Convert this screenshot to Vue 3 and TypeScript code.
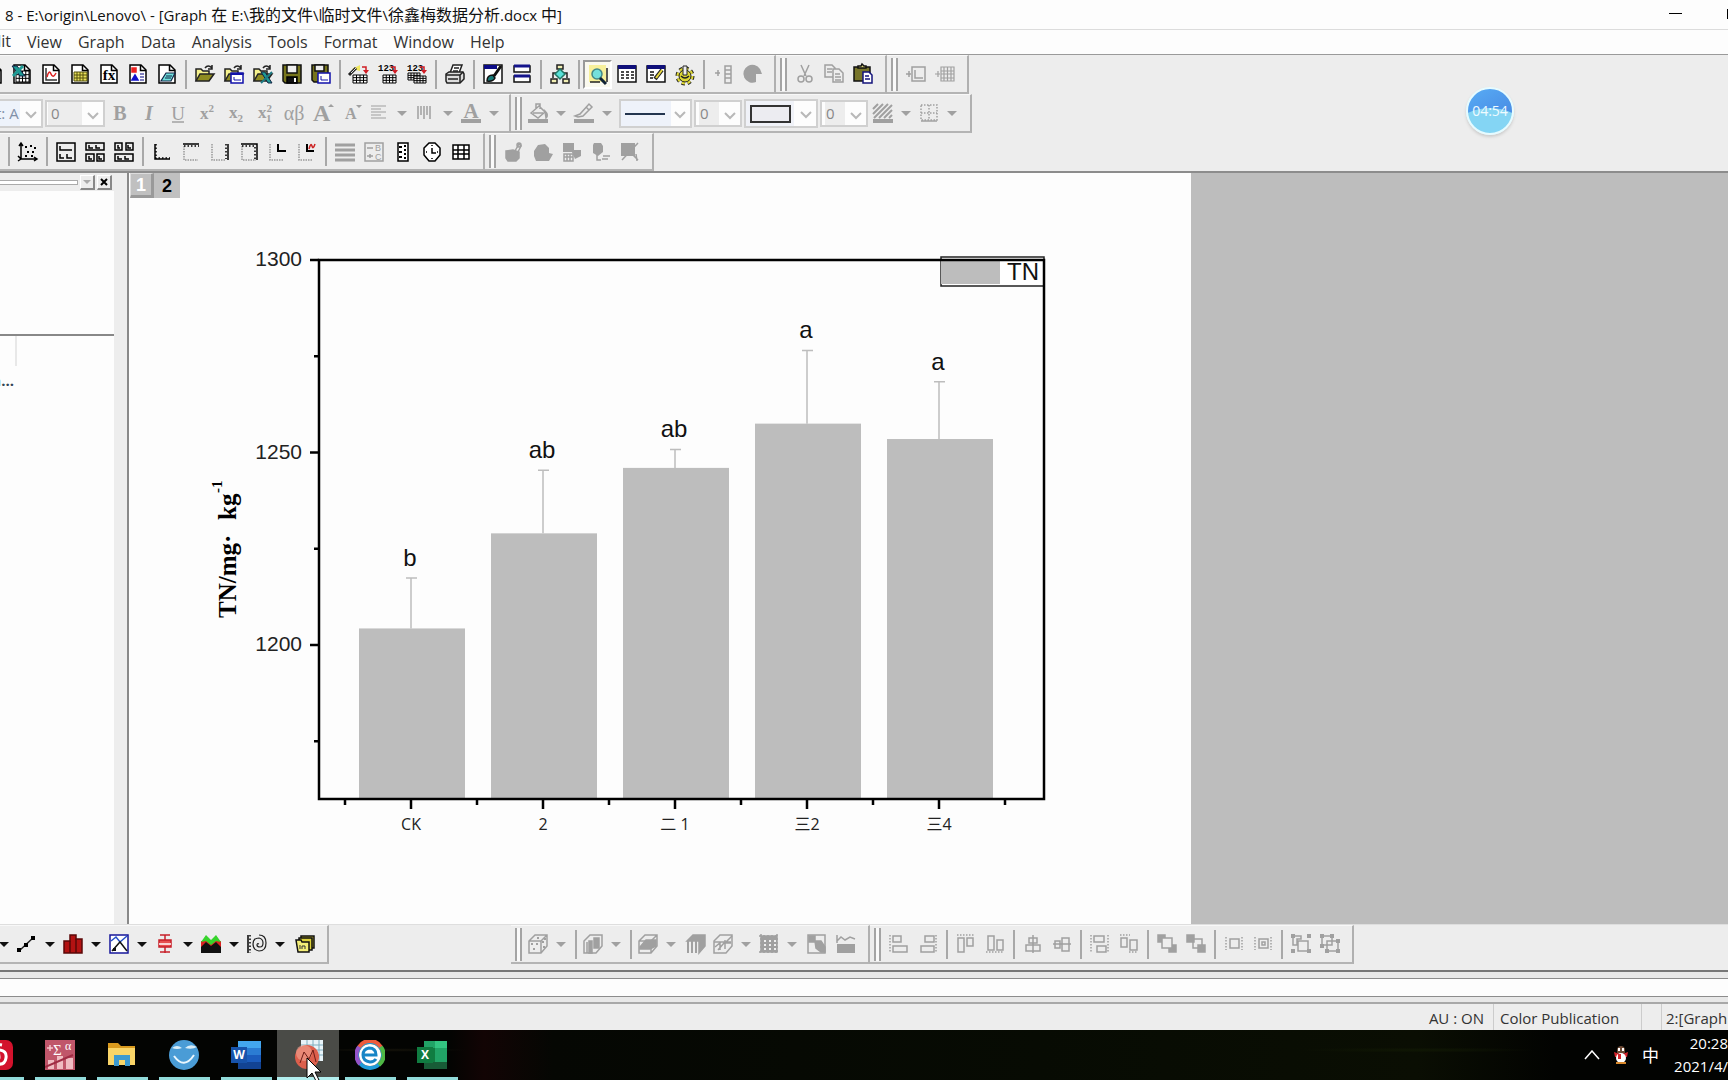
<script setup lang="ts">
interface Tool {
  icon: string
  kind?: 'sep' | 'drop' | 'pressed'
  tone?: 'gray'
}

const doc = '<path d="M2 1h11l5 5v13H2z" fill="#fff" stroke="#000"/><path d="M12.500 1v5.500H18" stroke="#000"/>'
const grid = (x: number, y: number, w: number, h: number, fill: string, stroke = '#000') =>
  `<path d="M${x} ${y}h${w}v${h}h-${w}zM${x} ${y + h / 3}h${w}M${x} ${y + (2 * h) / 3}h${w}M${x + w / 4} ${y}v${h}M${x + w / 2} ${y}v${h}M${x + (3 * w) / 4} ${y}v${h}" fill="${fill}" stroke="${stroke}" stroke-width="1"/>`
const letter = (t: string, size = 20, extra = '') =>
  `<text x="10" y="17" text-anchor="middle" stroke="none" fill="currentColor" font-family="Liberation Serif, serif" font-size="${size}" ${extra}>${t}</text>`
const digits = '<text x="0" y="7" stroke="none" fill="#000" font-size="9" font-weight="bold" font-family="Liberation Mono, monospace">123</text>'
const redArrow = '<path d="M13 3h4v4" stroke="#d01c24"/><path d="M14 6h6l-3 4z" stroke="none" fill="#d01c24"/>'
const folder = '<path d="M1 17V5h5l2 2h6v3" fill="#f6f28c" stroke="#222"/><path d="M1 17l4-7h14l-5 7z" fill="#8f8c20" stroke="#222"/><path d="M10 4q3-4 7 0M17 1v4h-4" stroke="#222"/>'
const cube = '<path d="M1 7l6-6h12v11l-6 7H1zM1 7h12l6-6M13 7v12"/>'
const dots = 'stroke-dasharray="1.500 1.500"'

const art: Record<string, string> = {
  sheet: doc + grid(4, 8, 12, 9, '#fff'),
  excel: doc + grid(4, 7, 13, 11, '#fff') + '<path d="M0 2h5l8 10H8z" fill="#1d9a94" stroke="#124" stroke-width="1"/><path d="M11 2L1 12" stroke="#1d9a94" stroke-width="3"/>',
  graph: doc + '<path d="M5 4v12h11" stroke="#333"/><path d="M6 13q2-8 4-3t5-1" stroke="#d22"/>',
  matrix: doc + '<path d="M4 8h13v9H4z" fill="#e8e05a" stroke="#55500c" stroke-width="1"/><path d="M4 11h13M4 14h13M7 8v9M10 8v9M13 8v9" stroke="#55500c" stroke-width="1"/>',
  fx: doc + '<text x="10" y="16" text-anchor="middle" stroke="none" fill="#000" font-size="15" font-weight="bold" font-family="Liberation Serif, serif">fx</text>',
  layout: doc + '<path d="M4 4h4v4H4z" fill="#e22" stroke="#e22"/><path d="M4 16l3-5 3 5z" fill="#11c" stroke="#11c"/><path d="M12 10h4M12 13h4M12 16h4" stroke="#55a"/>',
  notes: doc + '<path d="M9 9h9l-4 8H4z" fill="#6fe0dc" stroke="#124" stroke-width="1.200"/><path d="M9 12h6M8 14h6" stroke="#124" stroke-width="1"/>',
  open: folder,
  opengraph: folder + '<path d="M7 9h12v10H7z" fill="#fff" stroke="#11a"/><path d="M7 10h12" stroke="#11a" stroke-width="2"/><path d="M10 13v3h7" stroke="#11a" stroke-width="1"/>',
  openexcel: folder + '<path d="M8 8h4l7 11h-4z" fill="#1d9a94" stroke="#124" stroke-width="1"/><path d="M19 8L8 19" stroke="#1d7a84" stroke-width="2"/>',
  save: '<path d="M1 1h18v18H3l-2-2z" fill="#77751c" stroke="#111"/><path d="M5 1h10v8H5z" fill="#eee" stroke="#111"/><path d="M5 13h10v6H5z" fill="#111"/><path d="M12 14h2v4h-2z" fill="#fff" stroke="none"/>',
  saveas: '<path d="M1 1h16v17H3l-2-2z" fill="#77751c" stroke="#111"/><path d="M4 1h9v6H4z" fill="#eee" stroke="#111"/><path d="M7 9h12v10H7z" fill="#fff" stroke="#11a"/><path d="M10 12v4h7" stroke="#11a" stroke-width="1"/>',
  wizard: grid(4, 11, 14, 8, '#fff') + '<path d="M3 5l8-4v6z" fill="#f1e860" stroke="none"/><path d="M0 11l7-7" stroke="#222" stroke-width="3"/><path d="M2 9l5-5" stroke="#ddd" stroke-width="1"/>' + redArrow,
  import1: digits + grid(5, 11, 13, 8, '#fff') + redArrow,
  importn: digits + grid(1, 9, 12, 7, '#fff') + grid(7, 12, 12, 7, '#fff') + redArrow,
  print: '<path d="M5 9l3-8h9l-3 8" fill="#fff" stroke="#222"/><path d="M9 4h5M8 7h5" stroke="#222"/><path d="M1 10l3-2h14l1 2v5l-4 4H2l-1-2z" fill="#ddd" stroke="#222"/><path d="M1 11h14l3-3M15 11v8M3 15h10" stroke="#222"/>',
  theme: '<path d="M1 1h18v18H1z" fill="#fff" stroke="#111"/><path d="M1 3h13" stroke="#0b0b86" stroke-width="4"/><path d="M4 17q0-6 6-6l2 3q-2 4-8 3z" fill="#187a78" stroke="#111"/><path d="M11 12l7-10" stroke="#111" stroke-width="3"/>',
  split: '<path d="M2 2h16v6H2zM2 12h16v6H2z" fill="#fff" stroke="#111"/><path d="M2 2h16M2 12h16" stroke="#14148c" stroke-width="3"/>',
  tree: '<path d="M10 5v4M10 9H3v5M10 9h7v5" stroke="#222"/><path d="M7 1h6v4H7zM1 15h6v4H1zM13 15h6v4h-6z" fill="#f2efb4" stroke="#222"/><path d="M10 5l5 5-5 5-5-5z" fill="#58e0d8" stroke="#276"/>',
  explorer: '<path d="M1 1h17v17H1z" fill="#f7f09a" stroke="none"/><circle cx="9" cy="10" r="5" fill="#74e0dc" stroke="#488"/><path d="M2 18h10M19 4v14" stroke="#222"/><path d="M12 14l6 6" stroke="#123" stroke-width="3"/>',
  results: '<path d="M1 2h18v16H1z" fill="#fff" stroke="#111"/><path d="M1 3h18" stroke="#10107a" stroke-width="4"/><path d="M4 8h3M9 8h3M14 8h3M4 11h3M9 11h3M14 11h3M4 14h3M9 14h3M14 14h3" stroke="#111"/>',
  command: '<path d="M1 2h18v16H1z" fill="#fff" stroke="#111"/><path d="M1 3h18" stroke="#10107a" stroke-width="4"/><path d="M4 8h4M4 11h4M4 14h3" stroke="#111"/><path d="M9 15l7-9" stroke="#222" stroke-width="4"/><path d="M10 14l6-8" stroke="#e8d840" stroke-width="2"/>',
  gear: '<circle cx="10" cy="12" r="7" fill="none" stroke="#222" stroke-width="5" stroke-dasharray="3 2.500"/><circle cx="10" cy="12" r="7" fill="none" stroke="#ddd735" stroke-width="3" stroke-dasharray="3 2.500"/><circle cx="10" cy="12" r="6" fill="#ddd735" stroke="#222" stroke-width="1"/><path d="M8 2h4v9H8z" fill="#eee" stroke="#222" stroke-width="1"/><path d="M6 12q4 4 8 0" stroke="#222"/>',
  addcol: '<path d="M12 2h6v17h-6zM12 6h6M12 10h6M12 14h6M2 9h5M5 6v6"/>',
  pie: '<path d="M18 5A9 9 0 1 0 14 18V10h6z" fill="currentColor" stroke="none"/>',
  cut: '<path d="M6 1l5 11M14 1L9 12"/><circle cx="6" cy="15" r="3"/><circle cx="14" cy="15" r="3"/>',
  copy: '<path d="M1 1h7l3 3v9H1zM3 5h5M3 8h5"/><path d="M9 5h6l4 4v9H9z" fill="#eee"/><path d="M11 10h5M11 13h6M11 16h6"/>',
  paste: '<path d="M1 3h16v14H1z" fill="#77752a" stroke="#111"/><path d="M5 4V2h3l1-2 2 2h2v2z" fill="#ddd67a" stroke="#111"/><path d="M10 8h6l3 3v8h-9z" fill="#fff" stroke="#14147c"/><path d="M12 12h4M12 15h5" stroke="#14147c"/>',
  addlayer: '<path d="M6 3h13v14H6zM9 6v8h8M0 10h5M3 7v6"/>',
  addgrid: '<path d="M6 3h13v14H6zM9 3v14M12.500 3v14M16 3v14M6 7h13M6 10h13M6 14h13M0 10h5M3 7v6" stroke-width="1.200"/>',
  bold: letter('B', 20, 'font-weight="bold"'),
  italic: letter('I', 20, 'font-weight="bold" font-style="italic"'),
  underline: letter('U', 19) + '<path d="M4 19h12"/>',
  sup: '<text x="3" y="16" stroke="none" fill="currentColor" font-family="Liberation Serif, serif" font-size="17" font-weight="bold">x<tspan font-size="11" dy="-7">2</tspan></text>',
  sub: '<text x="3" y="15" stroke="none" fill="currentColor" font-family="Liberation Serif, serif" font-size="17" font-weight="bold">x<tspan font-size="11" dy="4">2</tspan></text>',
  supsub: '<text x="3" y="15" stroke="none" fill="currentColor" font-family="Liberation Serif, serif" font-size="17" font-weight="bold">x<tspan font-size="11" dy="-6">2</tspan><tspan font-size="11" dx="-6" dy="10">1</tspan></text>',
  greek: letter('αβ', 20),
  bigger: '<text x="0" y="18" stroke="none" fill="currentColor" font-family="Liberation Serif, serif" font-size="24" font-weight="bold">A</text><path d="M15 4l3-3 3 3z" fill="currentColor" stroke="none"/>',
  smaller: '<text x="3" y="16" stroke="none" fill="currentColor" font-family="Liberation Serif, serif" font-size="16" font-weight="bold">A</text><path d="M14 2h6l-3 3z" fill="currentColor" stroke="none"/>',
  align: '<path d="M2 3h15M2 6h10M2 9h15M2 12h10M2 15h15" stroke-width="1.200"/>',
  tabs: '<path d="M3 3v13M6 3v9M9 3v13M12 3v9M15 3v13"/>',
  fontcolor: '<text x="10" y="15" text-anchor="middle" stroke="none" fill="currentColor" font-family="Liberation Serif, serif" font-size="21" font-weight="bold">A</text><path d="M0 18h20" stroke-width="4"/>',
  bucket: '<path d="M0 18h20" stroke-width="4"/><path d="M3 10l8-7 6 6-7 6zM8 5V1h4v5M5 10h10"/><path d="M17 8q4 4 1 7z" fill="currentColor"/>',
  pen: '<path d="M0 18h20" stroke-width="4"/><path d="M1 13l5-2 9-10 3 3-9 9-5 1zM12 4l3 3"/>',
  hatch: '<path d="M0 18h20" stroke-width="4"/><path d="M0 6l5-5M0 11L10 1M1 15L15 1M6 15L19 2M11 15l8-8M16 15l3-3" stroke-width="2"/>',
  borders: `<path d="M2 2h16v15H2zM10 2v15M2 10h16" ${dots}/><path d="M2 18h16"/>`,
  scatter: '<path d="M3 1v16h16M1 4l2-3 2 3M16 15l3 2-3 2M0 14l3 3-3 2"/><path d="M7 4h2v2H7zM12 3h2v2h-2zM16 5h2v2h-2zM9 9h2v2H9zM14 9h2v2h-2zM7 13h2v2H7zM13 13h2v2h-2z" fill="#000" stroke="none"/>',
  panel1: '<path d="M1 1h18v18H1zM4 4v4h12M4 12v4h4M11 12v4h5"/>',
  panel4: '<path d="M1 1h18v7H1zM1 12h8v7H1zM12 12h7v7h-7zM4 3v3h4M11 3v3h4M4 14v3h3M14 14v3h3"/>',
  panel6: '<path d="M1 1h7v7H1zM12 1h7v7h-7zM1 12h18v7H1zM4 3v3h2M14 3v3h3M4 14v3h4M11 14v3h4"/>',
  axisbl: '<path d="M3 2v15h15" stroke-width="1.500"/><path d="M4 2v15M3 16h15" stroke-dasharray="1.500 2"/>',
  axistop: '<path d="M3 4v14h14" stroke="#999" stroke-dasharray="1.500 1"/><path d="M2 2h16"/><path d="M3 4h15" stroke-dasharray="1.500 2"/>',
  axisright: '<path d="M2 2v16h14" stroke="#999" stroke-dasharray="1.500 1"/><path d="M18 2v16"/><path d="M16 2v15" stroke-dasharray="1.500 2"/>',
  axisbox: '<path d="M3 4v14h14" stroke="#999" stroke-dasharray="1.500 1"/><path d="M2 2h16v16"/><path d="M3 4h13v14" stroke-dasharray="1.500 2"/>',
  inset: '<path d="M2 2v16h14" stroke="#999" stroke-dasharray="1.500 1"/><path d="M10 2v7h8" stroke-width="2"/>',
  insetcurve: '<path d="M2 2v16h14" stroke="#999" stroke-dasharray="1.500 1"/><path d="M10 2v7h7" stroke-width="2"/><path d="M12 7q2-7 3-3t3-2" stroke="#c22"/>',
  stack: '<path d="M0 3h20M0 8h20M0 13h20M0 18h20" stroke-width="3"/>',
  legend: '<path d="M1 1h18v18H1zM3 6h6M3 14h6M6 12v4"/><text x="11" y="9" font-size="9" stroke="none" fill="currentColor" font-family="Liberation Sans, sans-serif">B</text><text x="11" y="18" font-size="9" stroke="none" fill="currentColor" font-family="Liberation Sans, sans-serif">C</text>',
  scale: '<path d="M5 1h10v18H5z" fill="#fff"/><path d="M6 5h3M6 10h3M6 15h3" stroke-width="2"/><path d="M12 3v15" stroke-dasharray="2 2" stroke-width="2"/>',
  clock: '<path d="M7 1h6l5 5v7l-5 6H7l-5-6V6z" fill="#fff"/><path d="M10 6v5h4"/><path d="M10 3v1M10 16v1M4 10h1M15 10h1"/>',
  table: '<path d="M2 3h16v14H2zM2 8h16M2 12h16M7 3v14M13 3v14" fill="#fff"/>',
  hand1: '<path d="M2 9l7-1 6 2v6l-3 3H4l-2-3z" fill="currentColor"/><path d="M11 9l4-7 2 2-3 6"/><circle cx="15" cy="3" r="2"/>',
  hand2: '<path d="M1 9l4-6 7-1 4 4v5l4 1-4 7H3l-2-5z" fill="currentColor" stroke="none"/>',
  hand3: '<path d="M1 1h11v9H1zM9 8h10v6l-6 3z" fill="currentColor" stroke="none"/><path d="M2 12h9v7H2zM5 12v7M8 12v7M2 15h9"/>',
  hand4: '<path d="M3 1h7l2 3v6l-5 4-5-3V3z" fill="currentColor" stroke="none"/><path d="M6 13v5h4M12 14h7M11 17h6"/>',
  hand5: '<path d="M1 1h14v13H1z" fill="currentColor" stroke="none"/><path d="M2 18L18 1M3 3l15 15M16 12l1 7"/>',
  symline: '<path d="M2 17L17 3" stroke="#222"/><path d="M0 14h4v4H0zM7 9h4v4H7zM14 2h4v4h-4z" fill="#000" stroke="none"/>',
  column: '<path d="M1 7h6V1h6v4h6v14H1z" fill="#b31212" stroke="#5b0808"/><path d="M7 7v12M13 5v14" stroke="#5b0808"/>',
  multi: '<path d="M1 1h18v18H1z" fill="#fff" stroke="#16169a"/><path d="M2 7l5-4 4 5 7-6" stroke="#2350c8"/><path d="M3 17l8-9 7 9" stroke="#111"/><path d="M4 14h3v3H4z" fill="#111" stroke="none"/>',
  box: '<path d="M5 1h10M10 1v18M5 18h10" stroke="#c8202a"/><path d="M4 6h12v7H4z" fill="#e65050" stroke="#c8202a"/><path d="M4 10h12" stroke="#fff"/>',
  area: '<path d="M0 7h20v12H0z" fill="#d22" stroke="none"/><path d="M0 13l5-5 5 4 5-4 5 5v6H0z" fill="#111" stroke="none"/><path d="M0 8l5-7 5 5 5-5 5 7-5-1-5 4-5-4z" fill="#36d42c" stroke="none"/>',
  polar: '<path d="M1 1v18" /><path d="M3 1v18" stroke-dasharray="1.500 2"/><path d="M12 10q-2-1-2 1t3 2q3 0 3-4t-4-5q-6 0-6 6t6 7q7 0 7-8t-7-8" stroke="#222" stroke-width="1.200"/>',
  template: '<path d="M6 2h13v12H6z" fill="#c9bc2e" stroke="#111"/><path d="M4 4h13v12H4z" fill="#ddd238" stroke="#111"/><path d="M1 6h5l1 2h7v10H3z" fill="#f4ee78" stroke="#111"/><path d="M5 15v-4M7 15v-3h3v3" stroke="#333" stroke-width="1"/>',
  cubedots: cube + '<path d="M3 9h2v2H3zM8 9h2v2H8zM5 14h2v2H5zM14 7h2v2h-2zM16 4h2v2h-2zM9 3h2v2H9zM15 12h2v2h-2z" fill="currentColor" stroke="none"/>',
  cubebars: '<path d="M1 7l6-6h12v11l-6 7H1zM4 8v11"/><path d="M6 7h3v12H6zM11 4h5v10h-5z" fill="currentColor"/>',
  cubesurf: cube + '<path d="M2 13l6-7h10v6l-6 3H2z" fill="currentColor"/>',
  cubewall: '<path d="M1 7l6-6h12v11l-6 7V7z" fill="currentColor"/><path d="M2 7v12M6 7v12M10 7v12" stroke-width="2"/>',
  cubewire: '<path d="M1 7l6-6h12v11l-6 7H1z"/><path d="M1 8h12l6-6M2 13l6-5h10M5 16l6-7h7M7 8v8M12 6v9"/>',
  mesh: '<path d="M2 2h16v16H2z" fill="currentColor"/><path d="M0 2h20M0 18h20M2 0v20M18 0v20" stroke-dasharray="2 2"/><path d="M5 7h2M10 7h2M15 7h2M5 11h2M10 11h2M15 11h2M5 15h2M10 15h2M15 15h2" stroke="#eee" stroke-width="2"/>',
  imageplot: '<path d="M1 1h17v18H1z"/><path d="M2 2h6v6H2zM8 7h6l4 6v5h-4l-5-4z" fill="currentColor"/>',
  profile: '<path d="M1 10h18v9H1z" fill="currentColor" stroke="none"/><path d="M1 1v8M1 7l4-4 4 3 5-3 5 2"/>',
  alleft: `<path d="M1 1v18" ${dots}/><path d="M4 2h8v6H4zM4 12h14v6H4z"/>`,
  alright: `<path d="M18 1v18" ${dots}/><path d="M7 2h9v6H7zM3 12h13v6H3z"/>`,
  altop: `<path d="M1 1h18" ${dots}/><path d="M2 4h6v14H2zM11 4h6v8h-6z"/>`,
  albottom: `<path d="M1 18h18" ${dots}/><path d="M3 2h6v14H3zM12 6h6v10h-6z"/>`,
  alcx: '<path d="M10 1v18M6 4h8v5H6zM3 11h14v6H3z"/>',
  alcy: '<path d="M1 10h18M3 7h5v7H3zM10 4h7v13h-7z"/>',
  eqw: `<path d="M1 1v18M18 1v18" ${dots}/><path d="M4 2h10v6H4zM7 12h9v6H7z"/>`,
  eqh: `<path d="M1 1h10M10 18h9" ${dots}/><path d="M2 4h6v9H2zM11 6h7v10h-7z"/>`,
  front: '<path d="M1 1h7v7H1zM12 11h7v7h-7z" fill="currentColor"/><path d="M5 4h10v10H5z" fill="#eee"/>',
  back: '<path d="M7 5h9v9H7z"/><path d="M1 1h7v7H1zM12 11h7v7h-7z" fill="currentColor"/>',
  snap: `<path d="M6 5h9v9H6z"/><path d="M2 3v13M18 3v13" ${dots}/>`,
  snapgrid: `<path d="M6 5h9v9H6zM9 8h3v3H9z"/><path d="M2 3v13M18 3v13" ${dots}/>`,
  group: '<path d="M2 2h8v3H6v6H2zM7 7h10v10H7z"/><path d="M0 0h4v4H0zM16 0h4v4h-4zM0 15h4v4H0zM16 15h4v4h-4z" fill="currentColor" stroke="none"/>',
  ungroup: '<path d="M2 2h10v9H2zM7 7h11v10H7z"/><path d="M0 0h4v4H0zM10 0h4v4h-4zM0 10h4v4H0zM16 5h4v4h-4zM5 15h4v4H5zM16 15h4v4h-4z" fill="currentColor" stroke="none"/>',
}

function tools(spec: string, tone?: 'gray'): Tool[] {
  return spec.split(' ').map((s) => {
    if (s === '|') return { icon: 'sep', kind: 'sep' as const }
    if (s.endsWith('+')) return { icon: s.slice(0, -1), kind: 'drop' as const, tone }
    if (s.endsWith('!')) return { icon: s.slice(0, -1), kind: 'pressed' as const, tone }
    return { icon: s, tone }
  })
}

const standard = tools('sheet excel graph matrix fx layout notes | open opengraph openexcel save saveas | wizard import1 importn | print | theme split | tree | explorer! results command gear |').concat(tools('addcol pie', 'gray'))
const edit = tools('cut copy', 'gray').concat(tools('paste'))
const column = tools('addlayer addgrid', 'gray')
const format = tools('bold italic underline sup sub supsub greek bigger smaller align+ tabs+ fontcolor+', 'gray')
const style = tools('bucket+ pen+', 'gray')
const fill = tools('hatch+ borders+', 'gray')
const graphTools = tools('| scatter | panel1 panel4 panel6 | axisbl axistop axisright axisbox inset insetcurve |').concat(tools('stack legend', 'gray'), tools('scale clock table'))
const mask = tools('hand1 hand2 hand3 hand4 hand5', 'gray')
const plot2d = tools('symline+ column+ multi+ box+ area+ polar+ template')
const plot3d = tools('cubedots+ | cubebars+ | cubesurf+ cubewall cubewire+ mesh+ imageplot profile', 'gray')
const objects = tools('alleft alright | altop albottom | alcx alcy | eqw eqh | front back | snap snapgrid | group ungroup', 'gray')

const menus = ['View', 'Graph', 'Data', 'Analysis', 'Tools', 'Format', 'Window', 'Help']

const plot = { left: 190, right: 915, top: 87, bottom: 626, max: 1300, min: 1160 }
const yOf = (v: number) => plot.top + ((plot.max - v) * (plot.bottom - plot.top)) / (plot.max - plot.min)
const bars = [
  { name: 'CK', value: 1204.3, high: 1217.4, mark: 'b' },
  { name: '2', value: 1229, high: 1245.4, mark: 'ab' },
  { name: '二 1', value: 1246, high: 1250.8, mark: 'ab' },
  { name: '三2', value: 1257.5, high: 1276.5, mark: 'a' },
  { name: '三4', value: 1253.5, high: 1268.4, mark: 'a' },
]
const xOf = (i: number) => 282 + i * 132
const major = [1300, 1250, 1200]
const minor = [1275, 1225, 1175]

const apps = ['music', 'spss', 'files', 'bird', 'word', 'origin', 'browser', 'sheets']
const appArt: Record<string, string> = {
  music: '<rect width="30" height="30" rx="7" fill="#d3122c"/><path d="M19 5q-5-1-4 4l1 8q0 4-4 3t-2-6 7-4q7 1 6 8t-8 6" fill="none" stroke="#fff" stroke-width="3"/>',
  spss: '<path d="M0 0h30v30H0z" fill="#c0566a"/><path d="M3 20h6v9H3zM12 16h6v13h-6zM21 18h7v11h-7z" fill="#f0bcc2"/><path d="M0 27l28-12" stroke="#a02c44" stroke-width="2"/><path d="M2 8h6M5 5v6" stroke="#f5c5ca" stroke-width="1.500"/><text x="8" y="15" fill="#fff" font-size="15" font-family="Liberation Serif, serif">Σ</text><text x="20" y="10" fill="#fff" font-size="12" font-family="Liberation Serif, serif">α</text>',
  files: '<path d="M1 3h10l3 3h14v7H1z" fill="#d99a1e"/><path d="M1 8h27v17H1z" fill="#f9d568"/><path d="M7 26V15h16v11h-5v-6h-6v6z" fill="#3d9ad0"/>',
  bird: '<circle cx="15" cy="15" r="15" fill="#4a9cd6"/><path d="M3 8q5-4 10 0-5 2-10 0zM16 8q5-5 12-1-5 3-12 1z" fill="#d8edf8"/><path d="M5 16q10 14 20-1" fill="none" stroke="#eaf6fd" stroke-width="2"/>',
  word: '<path d="M7 1h23v28H7z" fill="#2b7cd3"/><path d="M7 1h23v7H7z" fill="#43a6ee"/><path d="M7 15h23v7H7z" fill="#1b5cbd"/><path d="M7 22h23v7H7z" fill="#124393"/><path d="M0 7h16v16H0z" fill="#1753ab"/><text x="8" y="19" text-anchor="middle" fill="#fff" font-size="12" font-weight="bold" font-family="Open Sans, sans-serif">W</text>',
  origin: '<path d="M8 0h22v21H8z" fill="#e8f3f8"/><path d="M8 5h22M8 10h22M8 15h22M14 0v21M20 0v21M26 0v21" stroke="#7eaebf"/><circle cx="14" cy="17" r="12" fill="#dc5f4c"/><circle cx="11" cy="13" r="8" fill="#f2a595" opacity=".6"/><path d="M7 23l4-11 5 7 4-9 3 12" fill="none" stroke="#6d1c16" stroke-width="1"/>',
  browser: '<circle cx="15" cy="15" r="13" fill="none" stroke="#1e9bd8" stroke-width="4"/><path d="M4 7A13 13 0 0 1 26 7" fill="none" stroke="#ef5b3c" stroke-width="4"/><path d="M4 7A13 13 0 0 0 5 24" fill="none" stroke="#9453c8" stroke-width="4"/><path d="M26 7A13 13 0 0 1 24 25" fill="none" stroke="#4fb844" stroke-width="4"/><circle cx="15" cy="15" r="11" fill="#fff"/><path d="M7 15h14q0-7-7-7-6 1-6 7t7 7q4 0 6-3" fill="none" stroke="#1885c6" stroke-width="3"/>',
  sheets: '<path d="M7 1h23v28H7z" fill="#21a366"/><path d="M18 1h12v7H18z" fill="#33c481"/><path d="M7 8h11v14H7z" fill="#107c41"/><path d="M7 22h23v7H7z" fill="#185c37"/><path d="M0 7h16v16H0z" fill="#107c41"/><text x="8" y="19" text-anchor="middle" fill="#fff" font-size="12" font-weight="bold" font-family="Open Sans, sans-serif">X</text>',
}
</script>

<template>
  <div class="window">
    <header class="title">
      <span>8 - E:\origin\Lenovo\ - [Graph <i class="han">在</i> E:\<i class="han">我的文件</i>\<i class="han">临时文件</i>\<i class="han">徐鑫梅数据分析</i>.docx <i class="han">中</i>]</span>
      <div class="controls">
        <button aria-label="Minimize"><i class="min"></i></button>
        <button aria-label="Restore"><i class="restore"></i></button>
      </div>
    </header>
    <nav class="menu">
      <button class="cut">dit</button>
      <button v-for="m in menus" :key="m">{{ m }}</button>
    </nav>

    <section class="docks">
      <div class="dock standard">
        <div v-for="(bar, b) in [standard, edit, column]" :key="b" class="bar">
          <span v-if="b > 0" class="grip"></span>
          <template v-for="(t, i) in bar" :key="i">
            <span v-if="t.kind === 'sep'" class="sep"></span>
            <button v-else class="tool" :class="[t.kind, t.tone]" :aria-label="t.icon">
              <svg viewBox="0 0 20 20" v-html="art[t.icon]"></svg>
            </button>
          </template>
        </div>
      </div>

      <div class="dock">
        <div class="bar text-bar">
          <div class="combo font">
            <select aria-label="Font"><option>t: A</option></select>
            <svg class="chev" viewBox="0 0 12 8"><path d="M1 1l5 5 5-5" /></svg>
          </div>
          <div class="combo size">
            <select aria-label="Font size"><option>0</option></select>
            <svg class="chev" viewBox="0 0 12 8"><path d="M1 1l5 5 5-5" /></svg>
          </div>
          <template v-for="t in format" :key="t.icon">
            <button class="tool gray" :class="{ slim: t.kind === 'drop' }" :aria-label="t.icon">
              <svg viewBox="0 0 20 20" v-html="art[t.icon]"></svg>
            </button>
            <button v-if="t.kind === 'drop'" class="arrow gray" :aria-label="t.icon + ' options'"></button>
          </template>
        </div>
        <div class="bar">
          <span class="grip"></span>
          <template v-for="t in style" :key="t.icon">
            <button class="tool gray slim" :aria-label="t.icon">
              <svg viewBox="0 0 20 20" v-html="art[t.icon]"></svg>
            </button>
            <button class="arrow gray" :aria-label="t.icon + ' options'"></button>
          </template>
          <div class="combo line">
            <select aria-label="Line style"><option></option></select>
            <i class="sample"></i>
            <svg class="chev" viewBox="0 0 12 8"><path d="M1 1l5 5 5-5" /></svg>
          </div>
          <div class="combo width">
            <select aria-label="Line width"><option>0</option></select>
            <svg class="chev" viewBox="0 0 12 8"><path d="M1 1l5 5 5-5" /></svg>
          </div>
          <div class="combo pattern">
            <select aria-label="Fill pattern"><option></option></select>
            <i class="swatch"></i>
            <svg class="chev" viewBox="0 0 12 8"><path d="M1 1l5 5 5-5" /></svg>
          </div>
          <div class="combo width">
            <select aria-label="Pattern width"><option>0</option></select>
            <svg class="chev" viewBox="0 0 12 8"><path d="M1 1l5 5 5-5" /></svg>
          </div>
          <template v-for="t in fill" :key="t.icon">
            <button class="tool gray slim" :aria-label="t.icon">
              <svg viewBox="0 0 20 20" v-html="art[t.icon]"></svg>
            </button>
            <button class="arrow gray" :aria-label="t.icon + ' options'"></button>
          </template>
        </div>
      </div>

      <div class="dock graphs">
        <div v-for="(bar, b) in [graphTools, mask]" :key="b" class="bar">
          <span v-if="b > 0" class="grip"></span>
          <template v-for="(t, i) in bar" :key="i">
            <span v-if="t.kind === 'sep'" class="sep"></span>
            <button v-else class="tool" :class="t.tone" :aria-label="t.icon">
              <svg viewBox="0 0 20 20" v-html="art[t.icon]"></svg>
            </button>
          </template>
        </div>
      </div>
    </section>

    <main class="work">
      <aside class="side">
        <div class="side-head">
          <i class="rails"></i>
          <button class="mini" aria-label="Options"><i class="tri"></i></button>
          <button class="mini" aria-label="Close">
            <svg viewBox="0 0 10 10"><path d="M2 2l6 6M8 2L2 8" /></svg>
          </button>
        </div>
        <div class="folders"></div>
        <div class="files">
          <span class="stem"></span>
          <div class="name"><span>n...</span></div>
        </div>
      </aside>
      <div class="child">
        <div class="page">
          <div class="layers"><button class="off">1</button><button class="on">2</button></div>
          <svg class="chart" viewBox="0 0 1062 751" role="img" aria-label="TN by treatment">
            <rect x="812" y="84" width="103" height="29" fill="#fff" stroke="#222" stroke-width="1.5" />
            <rect x="812" y="88" width="59" height="23" fill="#bdbdbd" />
            <text x="878" y="107" class="mark">TN</text>
            <g v-for="(b, i) in bars" :key="b.name">
              <rect :x="xOf(i) - 52" :y="yOf(b.value)" width="106" :height="plot.bottom - yOf(b.value)" fill="#bdbdbd" />
              <path :d="`M${xOf(i)} ${yOf(b.value)}V${yOf(b.high)}M${xOf(i) - 5} ${yOf(b.high)}h11`" class="err" />
              <text :x="xOf(i) - 1" :y="yOf(b.high) - 12" text-anchor="middle" class="mark">{{ b.mark }}</text>
              <path :d="`M${xOf(i)} ${plot.bottom}v10`" class="axis" />
              <text :x="xOf(i)" :y="plot.bottom + 31" text-anchor="middle" class="cat">{{ b.name }}</text>
            </g>
            <path v-for="i in 6" :key="i" :d="`M${xOf(i - 1) - 66} ${plot.bottom}v6`" class="axis" />
            <rect :x="plot.left" :y="plot.top" :width="plot.right - plot.left" :height="plot.bottom - plot.top" class="axis" />
            <g v-for="v in major" :key="v">
              <path :d="`M${plot.left} ${yOf(v)}h-9`" class="axis" />
              <text :x="plot.left - 17" :y="yOf(v) + 6" text-anchor="end" class="value">{{ v }}</text>
            </g>
            <path v-for="v in minor" :key="v" :d="`M${plot.left} ${yOf(v)}h-5`" class="axis" />
            <g transform="translate(107 445) rotate(-90)">
              <text class="ylabel">TN/mg·<tspan x="98">kg</tspan></text>
              <text x="125" y="-14" class="power">-1</text>
            </g>
          </svg>
        </div>
      </div>
    </main>

    <section class="dock bottom">
      <div v-for="(bar, b) in [plot2d, plot3d, objects]" :key="b" class="bar" :class="'b' + b">
        <span v-if="b > 0" class="grip"></span>
        <button v-else class="arrow" aria-label="line options"></button>
        <template v-for="(t, i) in bar" :key="i">
          <span v-if="t.kind === 'sep'" class="sep"></span>
          <template v-else>
            <button class="tool" :class="[t.tone, { slim: t.kind === 'drop' }]" :aria-label="t.icon">
              <svg viewBox="0 0 20 20" v-html="art[t.icon]"></svg>
            </button>
            <button v-if="t.kind === 'drop'" class="arrow" :class="t.tone" :aria-label="t.icon + ' options'"></button>
          </template>
        </template>
      </div>
    </section>
    <div class="gutter"></div>
    <input class="script" type="text" aria-label="Command line" />
    <div class="gutter low"></div>
    <footer class="status">
      <span class="au">AU : ON</span>
      <span class="theme">Color Publication</span>
      <span class="blank"></span>
      <span class="sheet">2:[Graph</span>
    </footer>

    <nav class="taskbar">
      <div class="apps">
        <button v-for="a in apps" :key="a" :class="{ current: a === 'origin' }" :aria-label="a">
          <svg viewBox="0 0 30 30" v-html="appArt[a]"></svg>
          <svg v-if="a === 'origin'" class="pointer" viewBox="0 0 16 25"><path d="M1 1v20l5-5 4 8 3-1-4-8h6z" fill="#fff" stroke="#000" /></svg>
        </button>
      </div>
      <div class="tray">
        <svg class="up" viewBox="0 0 16 10"><path d="M1 9l7-8 7 8" fill="none" stroke="#fff" stroke-width="1.5" /></svg>
        <svg class="penguin" viewBox="0 0 14 18"><path d="M3 3q1-3 4-3t4 3v4H3z" fill="#6c4a35" /><path d="M4 2h2v3H4zM8 2h2v3H8z" fill="#fff" /><path d="M0 6q7 3 14 0l-1 5H1z" fill="#d5252c" /><ellipse cx="7" cy="12" rx="5" ry="5" fill="#fff" /><path d="M4 8h3v5H4z" fill="#d5252c" /><path d="M2 17h10" stroke="#d9892c" stroke-width="2" /></svg>
        <span class="ime">中</span>
        <div class="clock"><span>20:28</span><span>2021/4/</span></div>
      </div>
    </nav>

    <div class="timer"><span>04:54</span></div>
  </div>
</template>

<style>
body {
  margin: 0;
  background: #ededed;
}
</style>

<style scoped>
.window {
  position: relative;
  display: flex;
  flex-direction: column;
  min-height: 100vh;
  overflow: hidden;
  background: #ededed;
  color: #222;
  font: 15px/20px "Open Sans", "Noto Sans CJK SC", sans-serif;
}
button, select, input {
  margin: 0;
  padding: 0;
  border: 0;
  border-radius: 0;
  background: none;
  color: inherit;
  font: inherit;
}
.title {
  display: flex;
  justify-content: space-between;
  align-items: center;
  height: 29px;
  padding-left: 5px;
  border-bottom: 1px solid #dcdcdc;
  background: #fdfdfd;
  color: #111;
  white-space: nowrap;
}
.han { font-size: 16px; font-style: normal; }
.controls { display: flex; gap: 36px; height: 29px; }
.controls button { display: flex; align-items: center; height: 27px; }
.min { width: 13px; height: 1px; background: #000; }
.restore { width: 1px; height: 10px; margin-left: 9px; background: #000; }
.menu {
  display: flex;
  gap: 16px;
  height: 24px;
  background: #fdfdfd;
  color: #333;
  font-size: 16px;
}
.menu button { line-height: 22px; }
.menu .cut { display: flex; justify-content: flex-end; width: 11px; overflow: hidden; white-space: nowrap; }
.docks { border-top: 1px solid #9a9a9a; }
.dock { display: flex; height: 39px; }
.standard { margin-left: -22px; }
.graphs { height: 38px; }
.graphs .bar:first-child { padding-left: 4px; }
.bar {
  display: flex;
  align-items: center;
  box-sizing: border-box;
  padding-right: 8px;
  border-top: 1px solid #f8f8f8;
  border-right: 2px solid #b0b0b0;
  border-bottom: 2px solid #b4b4b4;
}
.text-bar { padding-right: 5px; }
.grip {
  width: 3px;
  height: 33px;
  margin: 0 3px 0 4px;
  border: solid #a4a4a4;
  border-width: 0 2px;
  background: #fafafa;
}
.sep { width: 2px; height: 29px; margin: 0 3px 0 4px; background: #a8a8a8; }
.tool {
  display: flex;
  flex: none;
  justify-content: center;
  align-items: center;
  width: 29px;
  height: 29px;
  color: #000;
}
.tool.slim { width: 26px; }
.tool.gray, .arrow.gray { color: #a0a0a0; }
.tool svg {
  width: 20px;
  height: 20px;
  fill: none;
  stroke: currentColor;
  stroke-width: 1.5;
  overflow: visible;
}
.pressed { box-sizing: border-box; border: 2px solid; border-color: #999 #fff #fff #999; background: #faf9ee; }
.arrow { display: flex; justify-content: center; width: 20px; color: #111; }
.arrow::before { content: ""; border: 5px solid transparent; border-top-color: currentColor; border-bottom: 0; }
.combo {
  position: relative;
  box-sizing: border-box;
  height: 29px;
  margin-right: 2px;
  border: 2px solid #d0d0d0;
  background: #fdfdfd;
}
.combo select {
  appearance: none;
  width: 100%;
  height: 100%;
  padding-left: 4px;
  color: #888;
}
.chev {
  position: absolute;
  right: 4px;
  top: 10px;
  width: 12px;
  height: 8px;
  fill: none;
  stroke: #b8b8b8;
  stroke-width: 2;
  pointer-events: none;
}
.font { width: 43px; border-left: 0; background: linear-gradient(90deg, #eef3fb 20px, #fdfdfd 20px); }
.font select { padding-left: 0; color: #8190a8; text-indent: -4px; }
.size { width: 60px; height: 27px; margin-right: 0; background: linear-gradient(90deg, #fdfdfd 1px, #ededed 1px 35px, #fdfdfd 35px); }
.line { width: 73px; margin-left: 2px; background: linear-gradient(90deg, #eef2fa 50px, #fdfdfd 50px); }
.width { width: 48px; height: 27px; background: linear-gradient(90deg, #fdfdfd 3px, #ededed 3px 23px, #fdfdfd 23px); }
.pattern { width: 74px; background: linear-gradient(90deg, #f0f2f8 48px, #fdfdfd 48px); }
.sample, .swatch { position: absolute; left: 4px; pointer-events: none; }
.sample { top: 12px; width: 40px; height: 2px; background: #23354f; }
.swatch { top: 4px; box-sizing: border-box; width: 41px; height: 18px; border: 2px solid #333; background: #ececf1; }

.work { display: flex; flex: 1; min-height: 751px; border-top: 2px solid #8c8c8c; }
.side { display: flex; flex: none; flex-direction: column; width: 127px; }
.side-head { display: flex; align-items: center; gap: 2px; height: 18px; }
.rails { width: 77px; height: 3px; border: 1px solid #aaa; border-left: 0; background: #fff; }
.mini {
  display: flex;
  justify-content: center;
  align-items: center;
  box-sizing: border-box;
  width: 15px;
  height: 15px;
  border: 1px solid;
  border-color: #fff #888 #888 #fff;
  border-right-width: 2px;
  border-bottom-width: 2px;
}
.mini svg { width: 10px; height: 10px; stroke: #000; stroke-width: 2; }
.tri { border: 4px solid transparent; border-top-color: #aaa; border-bottom: 0; }
.folders { flex: none; width: 114px; height: 143px; border-bottom: 2px solid #888; background: #fdfdfd; }
.files { flex: 1; width: 114px; background: #fdfdfd; }
.stem { display: block; width: 15px; height: 30px; border-right: 2px solid #e8e8e8; }
.name { display: flex; justify-content: flex-end; width: 14px; margin-top: 4px; overflow: hidden; color: #345; font-weight: bold; }
.child { display: flex; flex: 1; min-width: 0; border-left: 2px solid #888; background: #bdbdbd; }
.page { position: relative; flex: 0 1 1062px; min-width: 0; background: #fdfdfd; }
.chart { display: block; width: 100%; }
.layers { position: absolute; left: 1px; top: 0; display: flex; height: 25px; background: #c0c0c0; font: bold 18px/26px "Liberation Sans", sans-serif; }
.off { box-sizing: border-box; width: 24px; border: solid; border-width: 1px 3px 3px 1px; border-color: #ddd #999 #999 #ddd; color: #fff; line-height: 20px; }
.on { width: 26px; color: #000; }
.axis { fill: none; stroke: #000; stroke-width: 2.5; }
.err { fill: none; stroke: #bdbdbd; stroke-width: 1.5; }
.mark { fill: #111; font: 24px "Liberation Sans", sans-serif; }
.value { fill: #222; font: 21px "Liberation Sans", sans-serif; }
.cat { fill: #222; font: 16px "Open Sans", "Noto Sans CJK SC", sans-serif; }
.ylabel { fill: #000; font: bold 25px "Liberation Serif", serif; }
.power { fill: #000; font: bold 15px "Liberation Serif", serif; }

.bottom { height: 39px; padding-bottom: 6px; border-top: 1px solid #dedede; }
.b0 { margin-left: -6px; }
.b1 { margin-left: 182px; }
.gutter { height: 6px; border-top: 2px solid #777; background: #e8e8e8; }
.script { display: block; box-sizing: border-box; width: 100%; height: 19px; border: solid #8c8c8c; border-width: 1px 0; background: #fdfdfd; outline: 0; }
.low { height: 5px; border-top: 0; border-bottom: 2px solid #a8a8a8; }
.status { display: flex; justify-content: flex-end; height: 26px; line-height: 28px; color: #333; white-space: nowrap; }
.status span { box-sizing: border-box; }
.au { padding-right: 9px; }
.theme { width: 148px; padding-left: 6px; border-left: 1px solid #ccc; }
.blank { width: 20px; border-left: 1px solid #ccc; }
.sheet { width: 67px; padding-left: 4px; border-left: 1px solid #ccc; }

.taskbar {
  display: flex;
  justify-content: space-between;
  height: 50px;
  background:
    radial-gradient(ellipse at 390px 20px, #15130a, transparent 80px),
    radial-gradient(ellipse at 82% 40%, #101704, transparent 120px),
    linear-gradient(90deg, #030402 26%, #120404 28%, #050703 32%, #070b03 60%, #0a0e03 82%, #020301 90%);
}
.apps { display: flex; margin-left: -33px; }
.apps button { position: relative; display: flex; flex: none; justify-content: center; align-items: center; width: 62px; height: 50px; }
.apps button > svg:first-child { width: 30px; height: 30px; }
.apps button::after { content: ""; position: absolute; left: 6px; right: 5px; bottom: 0; height: 3px; background: #91dbda; }
.apps .current { background: #4a4b47; }
.apps .current::after { left: 0; right: 0; background: #b2eeee; }
.pointer { position: absolute; left: 29px; top: 27px; z-index: 1; width: 16px; height: 25px; }
.tray { display: flex; align-items: center; color: #fff; }
.up { width: 16px; height: 10px; margin-right: 14px; }
.penguin { width: 14px; height: 18px; margin-right: 14px; }
.ime { margin-right: 15px; font: 17px/24px "Noto Sans CJK SC", sans-serif; }
.clock { display: flex; flex-direction: column; align-items: flex-end; width: 54px; line-height: 23px; }
.timer {
  position: absolute;
  left: 1466px;
  top: 87px;
  display: flex;
  justify-content: center;
  align-items: center;
  box-sizing: border-box;
  width: 48px;
  height: 48px;
  border: 2px solid #e6fbff;
  border-radius: 50%;
  background: radial-gradient(ellipse 34px 20px at 50% 88%, #84d5f4 96%, transparent 100%), linear-gradient(150deg, #58acf5, #437fdd);
  box-shadow: 0 2px 3px #ccc;
  color: #effbff;
  font-size: 14px;
}
</style>
